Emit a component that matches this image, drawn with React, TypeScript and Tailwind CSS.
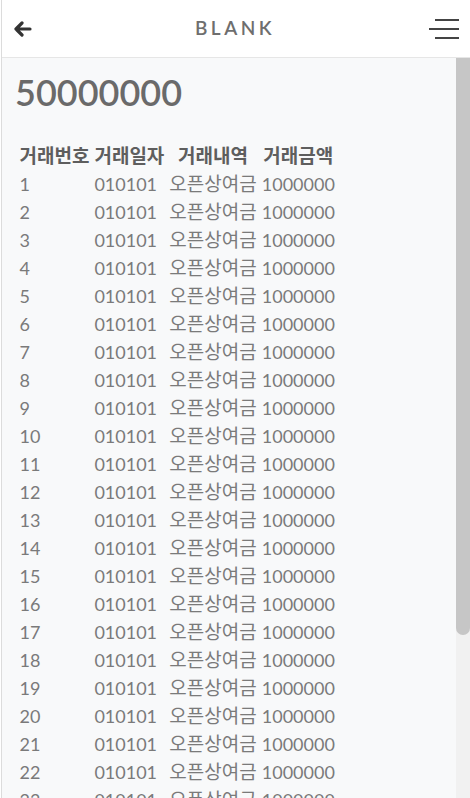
const rows = Array.from({ length: 30 }, (_, i) => ({
  no: i + 1,
  date: "010101",
  memo: "오픈상여금",
  amount: "1000000",
}));

const font = { fontFamily: 'Lato, "Noto Sans CJK KR", sans-serif' };

function BackIcon() {
  return (
    <svg width="18" height="16" viewBox="0 0 18 16" className="text-[#333]">
      <path
        d="M8 2 L2 8 L8 14 M2 8 H16"
        fill="none"
        stroke="currentColor"
        strokeWidth="3.2"
        strokeLinecap="round"
        strokeLinejoin="round"
      />
    </svg>
  );
}

function MenuIcon() {
  return (
    <div className="flex w-[30px] flex-col items-end gap-[7px]">
      <span className="block h-[2px] w-[24px] bg-[#444]" />
      <span className="block h-[2px] w-[30px] bg-[#444]" />
      <span className="block h-[2px] w-[24px] bg-[#444]" />
    </div>
  );
}

export default function App() {
  return (
    <div className="ml-px flex h-[798px] flex-col border-l border-[#dcdcdc] bg-white" style={font}>
      <header className="grid h-[58px] shrink-0 grid-cols-[1fr_auto_1fr] items-center border-b border-[#e6e6e6] bg-white pl-[12px] pr-[11px]">
        <div className="flex">
          <BackIcon />
        </div>
        <span className="mr-[3px] text-[19px] font-semibold tracking-[3.5px] text-[#6e6e6e]">BLANK</span>
        <div className="flex justify-end">
          <MenuIcon />
        </div>
      </header>

      <div className="flex min-h-0 flex-1">
        <main className="min-w-0 flex-1 overflow-hidden bg-[#f8f9fa] pl-[13px] pt-[13px]">
          <h1 className="text-[36px] font-semibold leading-[43px] text-[#6a6a6a]">50000000</h1>

          <table className="ml-[2px] mt-[28px] border-collapse text-[18px] text-[#7a7a7a]">
            <thead>
              <tr className="h-[28px]">
                {["거래번호", "거래일자", "거래내역", "거래금액"].map((h) => (
                  <th key={h} className="px-[2.5px] text-center text-[19px] font-bold leading-[28px] text-[#5e5e5e]">
                    {h}
                  </th>
                ))}
              </tr>
            </thead>
            <tbody>
              {rows.map((r) => (
                <tr key={r.no} className="h-[28px]">
                  <td className="px-[2.5px] leading-[28px]">{r.no}</td>
                  <td className="px-[2.5px] leading-[28px]">{r.date}</td>
                  <td className="px-[2.5px] text-[19px] leading-[28px]">{r.memo}</td>
                  <td className="px-[2.5px] leading-[28px]">{r.amount}</td>
                </tr>
              ))}
            </tbody>
          </table>
        </main>

        {/* scrollbar */}
        <div className="w-[14px] shrink-0 bg-[#f1f1f1]">
          <div className="h-[577px] rounded-b-[7px] bg-[#c6c6c6]" />
        </div>
      </div>
    </div>
  );
}
